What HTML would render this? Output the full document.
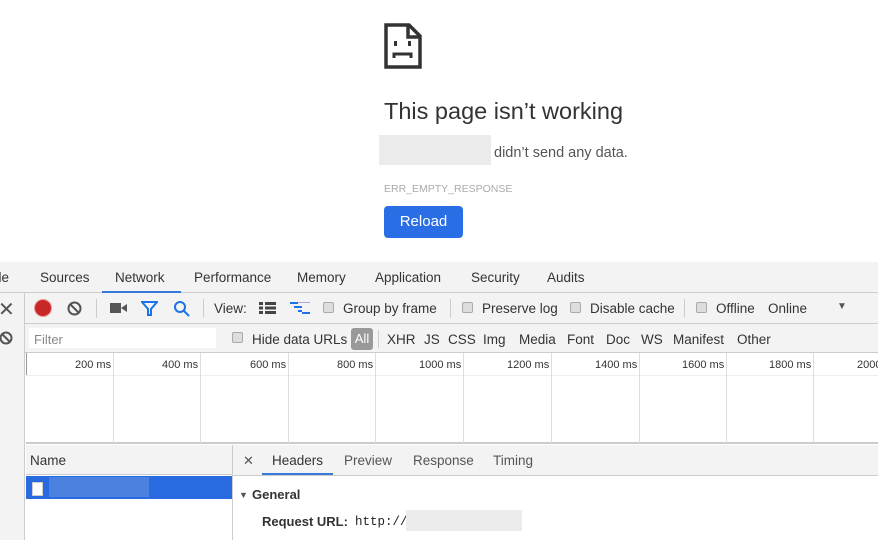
<!DOCTYPE html>
<html><head><meta charset="utf-8"><style>
*{margin:0;padding:0;box-sizing:border-box}
body{width:878px;height:540px;overflow:hidden;background:#fff;font-family:"Liberation Sans",sans-serif;position:relative;color:#333}
.a{position:absolute;white-space:nowrap}
.t{font-size:13.5px;color:#333}
.cb{position:absolute;width:11px;height:11px;border:1px solid #aaa;background:#ddd;border-radius:2px}
</style></head><body>
<svg class="a" style="left:384px;top:23px" width="38" height="46" viewBox="0 0 38 46">
<path d="M2 2H25L36 13V44H2Z" fill="none" stroke="#333" stroke-width="3.5"/>
<path d="M24 2V14H36" fill="none" stroke="#333" stroke-width="3.5"/>
<rect x="10" y="18" width="3" height="5" fill="#333"/><rect x="24" y="18" width="3" height="5" fill="#333"/>
<path d="M10 35V31H27V35" fill="none" stroke="#333" stroke-width="3"/>
</svg>
<div class="a" style="left:384px;top:98px;font-size:23.5px;color:#333">This page isn’t working</div>
<div class="a" style="left:379px;top:135px;width:112px;height:30px;background:#ebebeb"></div>
<div class="a" style="left:494px;top:145px;font-size:14.5px;color:#555">didn’t send any data.</div>
<div class="a" style="left:384px;top:183px;font-size:10.5px;color:#aaa">ERR_EMPTY_RESPONSE</div>
<div class="a" style="left:384px;top:206px;width:79px;height:32px;background:#2a6ee5;border-radius:4px;color:#fff;font-size:15px;text-align:center;line-height:32px">Reload</div>
<div class="a" style="left:0;top:262px;width:878px;height:31px;background:#f3f3f3;border-bottom:1px solid #ccc"></div>
<div class="a t" style="left:-9px;top:270px">ole</div>
<div class="a t" style="left:40px;top:270px">Sources</div>
<div class="a t" style="left:115px;top:270px">Network</div>
<div class="a" style="left:102px;top:291px;width:79px;height:2px;background:#3879d9"></div>
<div class="a t" style="left:194px;top:270px">Performance</div>
<div class="a t" style="left:297px;top:270px">Memory</div>
<div class="a t" style="left:375px;top:270px">Application</div>
<div class="a t" style="left:471px;top:270px">Security</div>
<div class="a t" style="left:547px;top:270px">Audits</div>
<div class="a" style="left:0;top:293px;width:878px;height:31px;background:#f3f3f3;border-bottom:1px solid #ccc"></div>
<div class="a" style="left:0;top:324px;width:878px;height:29px;background:#f3f3f3;border-bottom:1px solid #ccc"></div>
<div class="a" style="left:0;top:293px;width:25px;height:247px;background:#f3f3f3;border-right:1px solid #ccc"></div>
<div class="a" style="left:-2px;top:297px;font-size:20px;color:#555">✕</div>
<svg class="a" style="left:0;top:331px" width="14" height="14"><circle cx="6" cy="7" r="5.5" fill="none" stroke="#555" stroke-width="2"/><path d="M2 3L10 11" stroke="#555" stroke-width="2"/></svg>
<div class="a" style="left:35px;top:300px;width:16px;height:16px;border-radius:50%;background:#c62828;box-shadow:0 0 0 1px #e99"></div>
<svg class="a" style="left:67px;top:301px" width="15" height="15"><circle cx="7.5" cy="7.5" r="6" fill="none" stroke="#555" stroke-width="2"/><path d="M3.5 3.5L11.5 11.5" stroke="#555" stroke-width="2"/></svg>
<div class="a" style="left:96px;top:299px;width:1px;height:19px;background:#ccc"></div>
<svg class="a" style="left:110px;top:302px" width="17" height="12"><rect x="0" y="1" width="11" height="10" fill="#555"/><path d="M11 6L17 2V10Z" fill="#555"/></svg>
<svg class="a" style="left:141px;top:301px" width="17" height="15"><path d="M1 1H16L10 8V14H7V8Z" fill="none" stroke="#1a73e8" stroke-width="2"/></svg>
<svg class="a" style="left:173px;top:300px" width="17" height="17"><circle cx="7" cy="7" r="5" fill="none" stroke="#1a73e8" stroke-width="2"/><path d="M10.5 10.5L16 16" stroke="#1a73e8" stroke-width="2"/></svg>
<div class="a" style="left:203px;top:299px;width:1px;height:19px;background:#ccc"></div>
<div class="a t" style="left:214px;top:301px">View:</div>
<svg class="a" style="left:259px;top:302px" width="17" height="12"><g fill="#444"><rect x="0" y="0" width="4" height="3"/><rect x="6" y="0" width="11" height="3"/><rect x="0" y="4.5" width="4" height="3"/><rect x="6" y="4.5" width="11" height="3"/><rect x="0" y="9" width="4" height="3"/><rect x="6" y="9" width="11" height="3"/></g></svg>
<svg class="a" style="left:290px;top:302px" width="20" height="13"><g fill="#1a73e8"><rect x="0" y="0" width="8" height="2"/><rect x="4" y="4" width="8" height="2"/><rect x="8" y="8" width="4" height="2"/><rect x="12" y="10" width="8" height="2"/></g><rect x="8" y="0" width="12" height="1" fill="#aac"/></svg>
<div class="cb" style="left:323px;top:302px"></div><div class="a t" style="left:343px;top:301px">Group by frame</div>
<div class="a" style="left:450px;top:299px;width:1px;height:19px;background:#ccc"></div>
<div class="cb" style="left:462px;top:302px"></div><div class="a t" style="left:482px;top:301px">Preserve log</div>
<div class="cb" style="left:570px;top:302px"></div><div class="a t" style="left:590px;top:301px">Disable cache</div>
<div class="a" style="left:684px;top:299px;width:1px;height:19px;background:#ccc"></div>
<div class="cb" style="left:696px;top:302px"></div><div class="a t" style="left:716px;top:301px">Offline</div>
<div class="a t" style="left:768px;top:301px">Online</div>
<div class="a" style="left:837px;top:301px;font-size:10px;color:#555">▼</div>
<div class="a" style="left:29px;top:328px;width:187px;height:20px;background:#fff"></div>
<div class="a" style="left:34px;top:332px;font-size:13px;color:#888">Filter</div>
<div class="cb" style="left:232px;top:332px"></div><div class="a t" style="left:252px;top:332px">Hide data URLs</div>
<div class="a" style="left:351px;top:328px;width:22px;height:22px;background:#999;border-radius:3px;color:#fff;font-size:13px;text-align:center;line-height:22px">All</div>
<div class="a" style="left:378px;top:330px;width:1px;height:18px;background:#ccc"></div>
<div class="a t" style="top:332px;left:387px">XHR</div>
<div class="a t" style="top:332px;left:424px">JS</div>
<div class="a t" style="top:332px;left:448px">CSS</div>
<div class="a t" style="top:332px;left:483px">Img</div>
<div class="a t" style="top:332px;left:519px">Media</div>
<div class="a t" style="top:332px;left:567px">Font</div>
<div class="a t" style="top:332px;left:606px">Doc</div>
<div class="a t" style="top:332px;left:641px">WS</div>
<div class="a t" style="top:332px;left:673px">Manifest</div>
<div class="a t" style="top:332px;left:737px">Other</div>
<div class="a" style="left:26px;top:353px;width:852px;height:91px;background:#fff;border-bottom:2px solid #ccc"></div>
<div class="a" style="left:26px;top:375px;width:852px;height:1px;background:#eee"></div>
<div class="a" style="left:26px;top:353px;width:1px;height:22px;background:#999"></div>
<div style="font-size:11px;color:#333">
<div class="a" style="left:113px;top:353px;width:1px;height:90px;background:#ddd"></div><div class="a" style="left:75px;top:359px">200 ms</div>
<div class="a" style="left:200px;top:353px;width:1px;height:90px;background:#ddd"></div><div class="a" style="left:162px;top:359px">400 ms</div>
<div class="a" style="left:288px;top:353px;width:1px;height:90px;background:#ddd"></div><div class="a" style="left:250px;top:359px">600 ms</div>
<div class="a" style="left:375px;top:353px;width:1px;height:90px;background:#ddd"></div><div class="a" style="left:337px;top:359px">800 ms</div>
<div class="a" style="left:463px;top:353px;width:1px;height:90px;background:#ddd"></div><div class="a" style="left:419px;top:359px">1000 ms</div>
<div class="a" style="left:551px;top:353px;width:1px;height:90px;background:#ddd"></div><div class="a" style="left:507px;top:359px">1200 ms</div>
<div class="a" style="left:639px;top:353px;width:1px;height:90px;background:#ddd"></div><div class="a" style="left:595px;top:359px">1400 ms</div>
<div class="a" style="left:726px;top:353px;width:1px;height:90px;background:#ddd"></div><div class="a" style="left:682px;top:359px">1600 ms</div>
<div class="a" style="left:813px;top:353px;width:1px;height:90px;background:#ddd"></div><div class="a" style="left:769px;top:359px">1800 ms</div>
<div class="a" style="left:857px;top:359px">2000 ms</div>
</div>
<div class="a" style="left:26px;top:445px;width:206px;height:30px;background:#f3f3f3;border-bottom:1px solid #ccc"></div>
<div class="a t" style="left:30px;top:453px">Name</div>
<div class="a" style="left:232px;top:445px;width:1px;height:95px;background:#ccc"></div>
<div class="a" style="left:26px;top:476px;width:206px;height:23px;background:#2a6ae0"></div>
<div class="a" style="left:32px;top:482px;width:11px;height:14px;background:#fff;border:1px solid #ccc"></div>
<div class="a" style="left:49px;top:477px;width:100px;height:20px;background:#4b82e0"></div>
<div class="a" style="left:233px;top:445px;width:645px;height:31px;background:#f3f3f3;border-bottom:1px solid #ccc"></div>
<div class="a" style="left:243px;top:453px;font-size:13px;color:#555">✕</div>
<div class="a t" style="left:272px;top:453px">Headers</div>
<div class="a" style="left:262px;top:473px;width:71px;height:2px;background:#3879d9"></div>
<div class="a t" style="left:344px;top:453px;color:#555">Preview</div>
<div class="a t" style="left:413px;top:453px;color:#555">Response</div>
<div class="a t" style="left:493px;top:453px;color:#555">Timing</div>
<div class="a" style="left:239px;top:490px;font-size:9px;color:#555">▼</div>
<div class="a" style="left:252px;top:487px;font-size:13px;font-weight:bold;color:#333">General</div>
<div class="a" style="left:262px;top:514px;font-size:13px;font-weight:bold;color:#333">Request URL:</div>
<div class="a" style="left:355px;top:515px;font-family:'Liberation Mono',monospace;font-size:12.5px;color:#222">http://</div>
<div class="a" style="left:406px;top:510px;width:116px;height:21px;background:#ececec"></div>
</body></html>
